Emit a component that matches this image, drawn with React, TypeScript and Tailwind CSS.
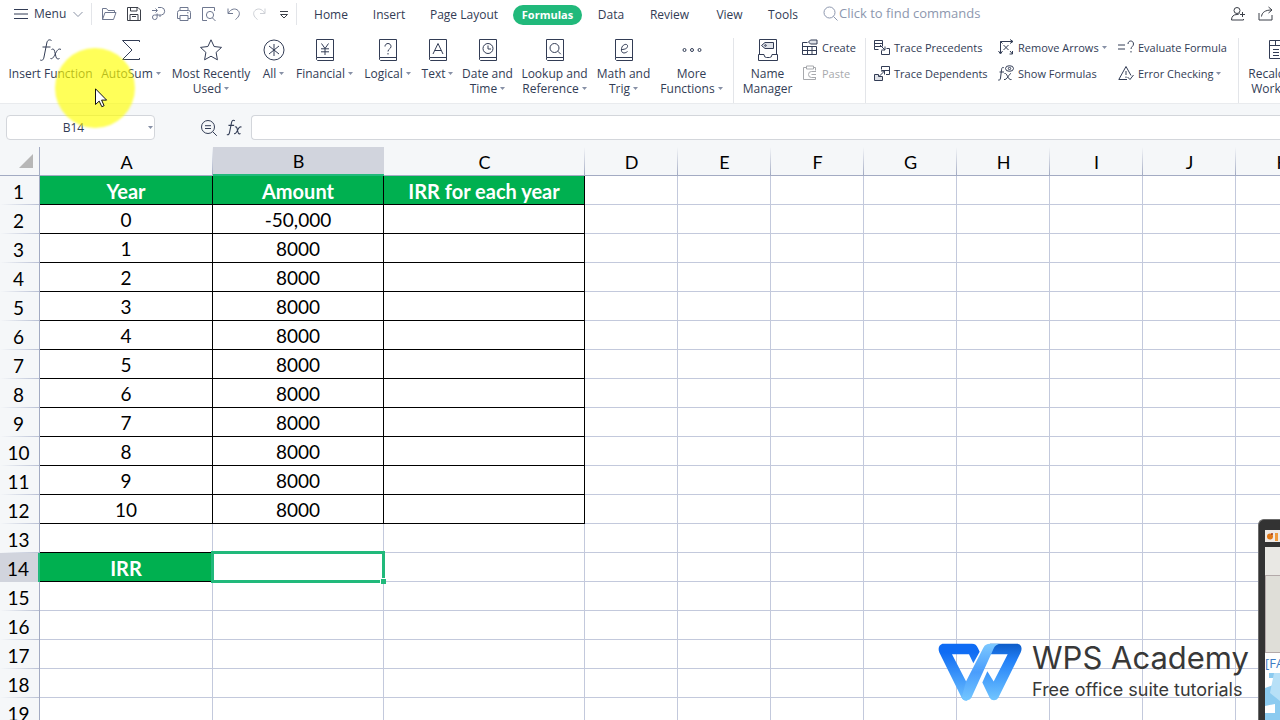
import type { ReactNode } from "react";

const COLS = ["A", "B", "C", "D", "E", "F", "G", "H", "I", "J", "K"];
const YEARS = ["0", "1", "2", "3", "4", "5", "6", "7", "8", "9", "10"];
const ROWS = Array.from({ length: 19 }, (_, i) => i + 1);

const TABS = [
  { label: "Home", width: "w-[58px]" },
  { label: "Insert", width: "w-[58px]" },
  { label: "Page Layout", width: "w-[92px]" },
  { label: "Formulas", width: "w-[75px]", active: true },
  { label: "Data", width: "w-[52px]" },
  { label: "Review", width: "w-[65px]" },
  { label: "View", width: "w-[55px]" },
  { label: "Tools", width: "w-[52px]" },
];

export default function App() {
  return (
    <div className="relative flex h-screen flex-col overflow-hidden bg-[#f5f7f9] font-['Open_Sans','Noto_Sans',sans-serif] text-xs text-[#323c55]">
      <MenuBar />
      <Ribbon />
      <FormulaBar />
      <main className="flex-1 overflow-hidden bg-white">
        <Sheet />
      </main>
      <Watermark />
      <FloatingWindow />
      <Pointer />
    </div>
  );
}

/* ---------- top bar ---------- */

function MenuBar() {
  return (
    <header className="flex h-7 shrink-0 items-center bg-white">
      <button className="flex w-[91px] items-center pl-3.5">
        <Svg w={14} h={12} box="0 0 14 12"><path d="M0 1.500h14M0 6h14M0 10.500h14" /></Svg>
        <span className="ml-1.5 w-[33px] text-left">Menu</span>
        <Svg w={10} h={7} box="0 0 10 7" color="text-[#8b93a5]" className="ml-1.5"><path d="M.5 1 5 5.500 9.500 1" /></Svg>
      </button>
      <Line className="h-[22px]" />
      <div className="ml-1 flex items-center">
        <QuickButton label="Open"><path d="M1.500 13.500v-11h4l1.500 2h6.500v2M1.500 13.500l2.500-7h11l-2.500 7z" /></QuickButton>
        <QuickButton label="Save" color="text-[#3b3f48]"><path d="M1.500 1.500h10.500l2.500 2.500v10.500h-13zM4.500 1.500v3.500h6.500v-3.500M4 14.500v-6h8v6M6 10.500h4" /></QuickButton>
        <QuickButton label="Export as PDF"><path d="M1 4.500h5M4.500 2.500l2 2-2 2M7 1.500h3.500a3.800 3.800 0 0 1 0 7.500H3.500a2 2 0 0 0-2 2v0a2.300 2.300 0 0 0 4.600.5V7.500M9 9v2" /></QuickButton>
        <QuickButton label="Print"><path d="M4 4.500v-3h8v3M4 12.500H1.500v-6q0-2 2-2h9q2 0 2 2v6H12M4 9.500h8v5H4zM11 6.800h1.500" /></QuickButton>
        <QuickButton label="Print Preview"><path d="M6 14.500H1.500v-13h12V5M11.300 11.800l3.200 3.200" /><circle cx="9" cy="9" r="3.600" /></QuickButton>
        <QuickButton label="Undo"><path d="M2 2.500v5h5M2.300 7.200C5 2.500 9.500 2 12 4.500s1.500 6-2.500 9" /></QuickButton>
        <QuickButton label="Redo" color="text-[#cdd0d6]"><path d="M14 2.500v5H9M13.700 7.200C11 2.500 6.500 2 4 4.500s-1.500 6 2.500 9" /></QuickButton>
        <QuickButton label="Customize" color="text-[#3b3f48]"><path d="M4 5.500h8M4.500 8.500h7L8 12z" /></QuickButton>
      </div>
      <Line className="h-[22px]" />
      <nav className="mt-0.5 ml-[5px] flex items-center">
        {TABS.map((t) => (
          <button key={t.label} className={`${t.width} flex justify-center whitespace-nowrap`}>
            {t.active
              ? <span className="w-[69px] rounded-full bg-[#21b97b] text-center text-[11px] leading-5 font-bold text-white">{t.label}</span>
              : <span className="leading-5">{t.label}</span>}
          </button>
        ))}
      </nav>
      <label className="ml-3.5 flex min-w-0 flex-1 items-center text-[#8d97ae]">
        <Svg w={15} h={15} box="0 0 15 15" color="text-[#8d97ae]"><circle cx="6.500" cy="6.500" r="5.500" /><path d="m10.500 10.500 4 4" /></Svg>
        <input aria-label="Click to find commands" placeholder="Click to find commands" className="ml-px w-full min-w-0 bg-transparent text-[13px] outline-none placeholder:text-[#8d97ae]" />
      </label>
      <button aria-label="Invite" className="mr-3">
        <Svg w={16} h={16} box="0 0 16 16" color="text-[#3b3f48]"><circle cx="7" cy="4.500" r="3" /><path d="M9.500 7.500q-1 1-2.500 1c-3.500 0-5.500 2-5.500 5.500h12v-1M10 8.500h5M12.500 6v5" /></Svg>
      </button>
      <button aria-label="Share" className="mr-1.5">
        <Svg w={16} h={16} box="0 0 16 16" color="text-[#3b3f48]"><path d="M1 7v7h13V9M3.500 10.500C4 6.500 7 4 13.500 4M10.500 1l3.500 3-3.500 3" /></Svg>
      </button>
    </header>
  );
}

function QuickButton({ label, color = "text-[#6f7890]", children }: { label: string; color?: string; children: ReactNode }) {
  return (
    <button aria-label={label} className="flex w-[25px] justify-center">
      <Svg w={16} h={16} box="0 0 16 16" color={color}>{children}</Svg>
    </button>
  );
}

/* ---------- ribbon ---------- */

function Ribbon() {
  return (
    <div className="flex h-[76px] shrink-0 items-start overflow-hidden border-b border-[#e9ebee] bg-white pt-2.5 pl-[5px]">
      <BigButton width="w-[91px]" lines={["Insert Function"]} icon={<FxGlyph />} />
      <BigButton width="w-[70px]" lines={["AutoSum"]} caret icon={<path d="M20.500 4V2.500h-17l9.500 9.500-9.500 9.500h17V20" />} />
      <BigButton width="w-[90px]" lines={["Most Recently", "Used"]} caret icon={<path d="m12 1.800 3.100 6.700 7.400.9-5.400 5 1.300 7.400L12 18.200l-6.400 3.600 1.300-7.400-5.400-5 7.400-.9z" strokeLinejoin="round" />} />
      <BigButton width="w-[35px]" lines={["All"]} caret icon={<><circle cx="12" cy="12" r="10" /><path d="M12 6v12M7 8l10 8M17 8 7 16" /></>} />
      <BigButton width="w-[67px]" lines={["Financial"]} caret icon={<><Book /><path d="m8.500 5.500 3.500 5 3.500-5M12 10.500V17M8 10.800h8M8 13.800h8" /></>} />
      <BigButton width="w-[59px]" lines={["Logical"]} caret icon={<><Book /><path d="M9 8.500c0-4 6-4 6 0 0 2.500-3 2.300-3 5M12 15v1.500" /></>} />
      <BigButton width="w-[41px]" lines={["Text"]} caret icon={<><Book /><path d="M7 16 12 5.500 17 16M8.800 12.500h6.400" /></>} />
      <BigButton width="w-[59px]" lines={["Date and", "Time"]} caret icon={<><Book /><circle cx="12" cy="10.500" r="5" /><path d="M12 7.500v3.500h3" /></>} />
      <BigButton width="w-[75px]" lines={["Lookup and", "Reference"]} caret icon={<><Book /><circle cx="11.500" cy="10" r="4.500" /><path d="m14.800 13.200 3 3" /></>} />
      <BigButton width="w-[63px]" lines={["Math and", "Trig"]} caret icon={<><Book /><path d="M9.500 11.500c4 0 6.500-1.500 6-4-.6-2-5-1.500-6 3-.8 5 3 5.500 6 3" /></>} />
      <BigButton width="w-[73px]" lines={["More", "Functions"]} caret icon={<><circle cx="4.500" cy="12" r="1.500" /><circle cx="12" cy="12" r="1.500" /><circle cx="19.500" cy="12" r="1.500" /></>} />
      <Line className="ml-[5px] h-[68px]" />
      <BigButton width="w-[67px]" lines={["Name", "Manager"]} icon={<><path d="M3.500 16V1.500h17V16M2.500 16.500H8q0 3 2.500 3h3q2.500 0 2.500-3h5.500v6h-19z" /><path d="M9 4.500h8.500v6H9L5.500 7.500z" fill="#dfe2e8" /><circle cx="9.500" cy="7.500" r=".8" /></>} />
      <div className="flex w-[64px] shrink-0 flex-col pl-px">
        <SmallButton label="Create" icon={<><path d="M5.500 3.500h-5v12h14v-8M.5 7.500h14M.5 11.500h14M5.500 7.500v8M10 7.500v8" /><path d="M8.500 1h6.500v4H8.500L6.500 3z" fill="#dfe2e8" /></>} />
        <SmallButton label="Paste" disabled icon={<><path d="M4.500 2.500h-3v12h12v-2M11.500 2.500h2v3M4.500 1h7v3h-7z" /><path d="M14 6.500H9.500a3 3 0 0 0 0 6H14M9.500 9.500H14" /></>} />
      </div>
      <Line className="h-[68px]" />
      <div className="flex w-[124px] shrink-0 flex-col pl-2">
        <SmallButton label="Trace Precedents" icon={<><path d="M7 7.500H.5v-6h8v6M.5 4.500h8M.5 7.500v3h4M6 6l5 5M11 7.500V11H7.500" /><path d="M7.500 11.500v4h8v-6h-3" /></>} />
        <SmallButton label="Trace Dependents" icon={<><path d="M7.500 4.500v-3h8v8H12M7.500 5.500h8M5.500 11l5-5M7 6h3.500v3.500" /><path d="M.5 9.500h4v2h4v4h-8z" fill="#dfe2e8" /></>} />
      </div>
      <div className="flex w-[120px] shrink-0 flex-col pl-2">
        <SmallButton label="Remove Arrows" caret icon={<path d="M2.500 14V2.500H15M.5 12l2 3 2-3M12 .5l3 2-3 2M5.500 6l5 5M10.500 6l-5 5M2.500 2.500l2 2M11.500 15h3v-3M12 12l2.500 3" />} />
        <SmallButton label="Show Formulas" icon={<><path d="M6 3C4.500 1.500 3.700 3 3.500 5l-1 8c-.3 2-1 2.500-2.300 2M1.500 7H6M6.500 8.500c3-1 3 7 7 6M13 8.500c-2 0-4 7-7 6" /><ellipse cx="11.500" cy="3.500" rx="4" ry="2.800" /><circle cx="11.500" cy="3.500" r="1.200" /></>} />
      </div>
      <div className="flex w-[128px] shrink-0 flex-col pl-2">
        <SmallButton label="Evaluate Formula" icon={<path d="M0 6h7M0 10h7M10 5c0-4 5.500-4 5.500 0 0 2.500-2.500 2.500-2.500 5M13 12v1.500" />} />
        <SmallButton label="Error Checking" caret icon={<path d="M9 14.500H.8L8 1.500l5 9M8 6v4M8 11.500V13M9.500 12l2.500 2.500 3.500-4.500" />} />
      </div>
      <Line className="h-[68px]" />
      <BigButton width="w-[82px]" lines={["Recalculate", "Workbook"]} icon={<path d="M1.500 2.500h20v18h-20zM1.500 7.500h20M7.500 2.500v5M15.500 2.500v5M5 11.500h6M5 14.500h6M5 17.500h6" />} />
    </div>
  );
}

function BigButton({ width, lines, caret, icon }: { width: string; lines: string[]; caret?: boolean; icon: ReactNode }) {
  return (
    <button className={`${width} flex shrink-0 flex-col items-center`}>
      <Svg w={24} h={24} box="0 0 24 24">{icon}</Svg>
      <span className="mt-1 text-center leading-[15px] whitespace-nowrap">
        {lines.map((l, i) => (
          <span key={l} className="block">
            {l}
            {caret && i === lines.length - 1 && <Caret />}
          </span>
        ))}
      </span>
    </button>
  );
}

function SmallButton({ label, icon, caret, disabled }: { label: string; icon: ReactNode; caret?: boolean; disabled?: boolean }) {
  return (
    <button disabled={disabled} className={`flex h-[26px] items-start pt-px text-[11px] whitespace-nowrap ${disabled ? "text-[#a7a9ad]" : ""}`}>
      <Svg w={16} h={16} box="0 0 16 16" color="text-inherit">{icon}</Svg>
      <span className="ml-1 leading-[17px]">{label}{caret && <Caret />}</span>
    </button>
  );
}

function Caret() {
  return (
    <svg width="5" height="3" viewBox="0 0 5 3" className="ml-[3px] inline-block align-[3px] text-[#8790a6]">
      <path d="M0 0h5L2.500 3z" fill="currentColor" />
    </svg>
  );
}

function Book() {
  return <path d="M3.500 19.500v-18h17v21h-16l-1-1v-2h17" />;
}

function FxGlyph() {
  return (
    <path d="M12.500 2.500c-2.300-1.500-4.200-.3-4.700 2.500L5 19c-.5 2.800-1.800 4-3.800 3M3.500 9h8M12.500 11.500c1.800-1 2.600-.3 3.200 2l1.200 5c.6 2.500 1.800 3 3.600 2M22 11.500c-2.500-1.500-4 1-5.500 4s-3 6-5 5" />
  );
}

/* ---------- formula bar ---------- */

function FormulaBar() {
  return (
    <div className="flex h-[43px] shrink-0 items-center bg-[#f5f7f9] pt-1.5 pb-0.5 pl-1.5">
      <div className="relative w-[149px] shrink-0">
        <input aria-label="Name box" defaultValue="B14" className="block h-[25px] w-full rounded-sm border border-[#d3d6db] bg-white pr-3.5 text-center outline-none" />
        <span className="absolute inset-y-0 right-0.5 flex items-center"><Caret /></span>
      </div>
      <button aria-label="Find" className="ml-[45px]">
        <Svg w={18} h={18} box="0 0 18 18"><circle cx="8" cy="8" r="6.500" /><path d="m12.800 12.800 4 4M5 6.700h6M5 9.500h6" /></Svg>
      </button>
      <button aria-label="Insert function" className="ml-2">
        <Svg w={17} h={17} box="0 0 24 24" stroke={1.5}><FxGlyph /></Svg>
      </button>
      <input aria-label="Formula" className="ml-2 h-[25px] min-w-0 flex-1 rounded-l-sm border border-r-0 border-[#d3d6db] bg-white px-2 outline-none" />
    </div>
  );
}

/* ---------- sheet ---------- */

function cellText(col: string, row: number) {
  if (row === 1) return ({ A: "Year", B: "Amount", C: "IRR for each year" } as Record<string, string>)[col] ?? "";
  if (row === 14 && col === "A") return "IRR";
  if (row >= 2 && row <= 12) {
    if (col === "A") return YEARS[row - 2];
    if (col === "B") return row === 2 ? "-50,000" : "8000";
  }
  return "";
}

function cellClass(col: string, row: number) {
  const inData = row <= 12 && "ABC".includes(col);
  const title = (row === 1 && inData) || (row === 14 && col === "A");
  const underline = inData || (col === "A" && (row === 13 || row === 14));
  return [
    "relative border-r border-b p-0 pt-0.5 text-center",
    inData ? "border-r-black" : "border-r-[#c3c9dc]",
    underline ? "border-b-black" : "border-b-[#c3c9dc]",
    title ? "bg-[#00b050] text-xl leading-[26px] font-bold text-white" : "",
  ].join(" ");
}

function Sheet() {
  return (
    <table className="w-[1329px] table-fixed border-separate border-spacing-0 font-['Lato','Open_Sans',sans-serif] text-[19px] leading-[26px] text-black">
      <colgroup>
        <col className="w-10" />
        <col className="w-[173px]" />
        <col className="w-[171px]" />
        <col className="w-[201px]" />
        {COLS.slice(3).map((c) => <col key={c} className="w-[93px]" />)}
      </colgroup>
      <thead>
        <tr className="h-[29px]">
          <th className="border-r border-b border-[#a3abc3] bg-[#f5f7f9] p-0">
            <svg width="14" height="14" viewBox="0 0 14 14" className="ml-[19px]"><path d="M14 0v14H0z" fill="#b7b7b7" /></svg>
          </th>
          {COLS.map((c) => (
            <th
              key={c}
              scope="col"
              className={`p-0 pt-px text-center text-lg leading-[26px] font-normal ${
                c === "B"
                  ? "border-b-2 border-[#21b97b] bg-[#d1d4dd]"
                  : "border-b border-[#a3abc3] bg-[#f5f7f9] bg-[linear-gradient(to_bottom,transparent,#a3abc3)] bg-[length:1px_100%] bg-right bg-no-repeat"
              }`}
            >
              {c}
            </th>
          ))}
        </tr>
      </thead>
      <tbody>
        {ROWS.map((r) => (
          <tr key={r} className="h-[29px]">
            <th
              scope="row"
              className={`p-0 pt-0.5 pr-0.5 text-center font-normal ${
                r === 14
                  ? "border-r-2 border-r-[#21b97b] bg-[#d1d4dd]"
                  : "border-r border-r-[#a3abc3] bg-[#f5f7f9] bg-[linear-gradient(to_right,transparent,#b9c0d4)] bg-[length:100%_1px] bg-bottom bg-no-repeat"
              }`}
            >
              {r}
            </th>
            {COLS.map((c) => (
              <td key={c} className={cellClass(c, r)}>
                {cellText(c, r)}
                {r === 14 && c === "B" && (
                  <span className="absolute -inset-0.5 z-10 border-3 border-[#21b97b]">
                    <span className="absolute -right-1 -bottom-1 size-1.5 border-t border-l border-white bg-[#21b97b]" />
                  </span>
                )}
              </td>
            ))}
          </tr>
        ))}
      </tbody>
    </table>
  );
}

/* ---------- overlays ---------- */

function Watermark() {
  return (
    <div className="absolute right-[31px] bottom-3.5 z-20 flex items-center gap-2.5 text-[#383838]">
      <svg width="84" height="59" viewBox="20 22 252 176" className="mb-1">
        <defs>
          <linearGradient id="left" x1="0" y1="0" x2="0" y2="1"><stop offset="0.150" stopColor="#0f6cf4" /><stop offset="1" stopColor="#6cc0ff" /></linearGradient>
          <linearGradient id="mid" x1="0" y1="0" x2="0" y2="1"><stop offset="0" stopColor="#7cc8ff" /><stop offset="0.500" stopColor="#4a9dfc" /><stop offset="1" stopColor="#72c6ff" /></linearGradient>
          <linearGradient id="right" x1="0" y1="0" x2="0" y2="1"><stop offset="0" stopColor="#0d5cc8" /><stop offset="0.300" stopColor="#2381f8" /><stop offset="1" stopColor="#72c6ff" /></linearGradient>
        </defs>
        <path d="M36 24h86c9 0 14 4 18 13l5 11-19 34-13-27H62l56 108-10 31c-8 2-14-2-17-8L24 50c-6-14 2-26 12-26z" fill="url(#left)" />
        <path d="M176 24h80c14 0 18 14 12 26l-67 136c-6 10-20 10-26 0l-22-46 15-34 19 31 42-82h-53z" fill="url(#right)" />
        <path d="M104 137l52-101c5-9 10-12 20-12h36c-14 0-20 4-26 16l-66 146c-6 10-24 10-29 0z" fill="url(#mid)" />
      </svg>
      <div className="font-['Inter',sans-serif] whitespace-nowrap">
        <div className="text-[31px] leading-8">WPS Academy</div>
        <div className="text-lg leading-8">Free office suite tutorials</div>
      </div>
    </div>
  );
}

function FloatingWindow() {
  return (
    <aside className="absolute right-0 bottom-0 z-20 flex h-[201px] w-[22px] flex-col overflow-hidden rounded-tl-md border-t border-l border-[#6b6b6b] bg-[#333] pl-1.5">
      <div className="flex h-[27px] shrink-0 items-center pt-1">
        <svg width="15" height="12" viewBox="0 0 15 12"><path d="M0 0h15v12H0z" fill="#efeae6" /><circle cx="5" cy="6.500" r="3" fill="#e07818" /><path d="M10 3h3v8h-3z" fill="#ef9a3c" /><circle cx="7" cy="4" r="1" fill="#a33a16" /></svg>
      </div>
      <div className="h-7 shrink-0 bg-[#e9e8e4]" />
      <div className="h-[78px] shrink-0 border-y border-l border-[#b3a9a9] bg-[#dfded8]" />
      <div className="h-5 shrink-0 overflow-hidden bg-white text-[13px] leading-5 whitespace-nowrap text-[#3f7cc4]">[FA</div>
      <svg width="15" height="47" viewBox="0 0 15 47" className="shrink-0"><path d="M0 0h15v47H0z" fill="#8ccbf0" /><path d="M0 0h4v5h4v7l-8 3zM0 33l10-2v9H0z" fill="#fff" /><path d="M9 0h6v28L5 20z" fill="#b7e0f7" /></svg>
    </aside>
  );
}

function Pointer() {
  return (
    <>
      <div className="pointer-events-none absolute top-12 left-[55px] z-20 size-20 rounded-full bg-[#ffff00]/65 blur-[1px]" />
      <svg width="13" height="20" viewBox="0 0 13 20" className="pointer-events-none absolute top-[88px] left-[95px] z-20">
        <path d="M.5.800v15.700l3.700-3.400 2.600 5.600 2.300-1-2.500-5.600h5z" fill="#fff" stroke="#111" />
      </svg>
    </>
  );
}

/* ---------- bits ---------- */

function Line({ className }: { className: string }) {
  return <span className={`w-px shrink-0 bg-[#e3e5e9] ${className}`} />;
}

type SvgProps = { w: number; h: number; box: string; color?: string; className?: string; stroke?: number; children: ReactNode };

function Svg({ w, h, box, color = "text-[#323c55]", className = "", stroke = 1, children }: SvgProps) {
  return (
    <svg width={w} height={h} viewBox={box} fill="none" stroke="currentColor" strokeWidth={stroke} className={`shrink-0 ${color} ${className}`}>
      {children}
    </svg>
  );
}
